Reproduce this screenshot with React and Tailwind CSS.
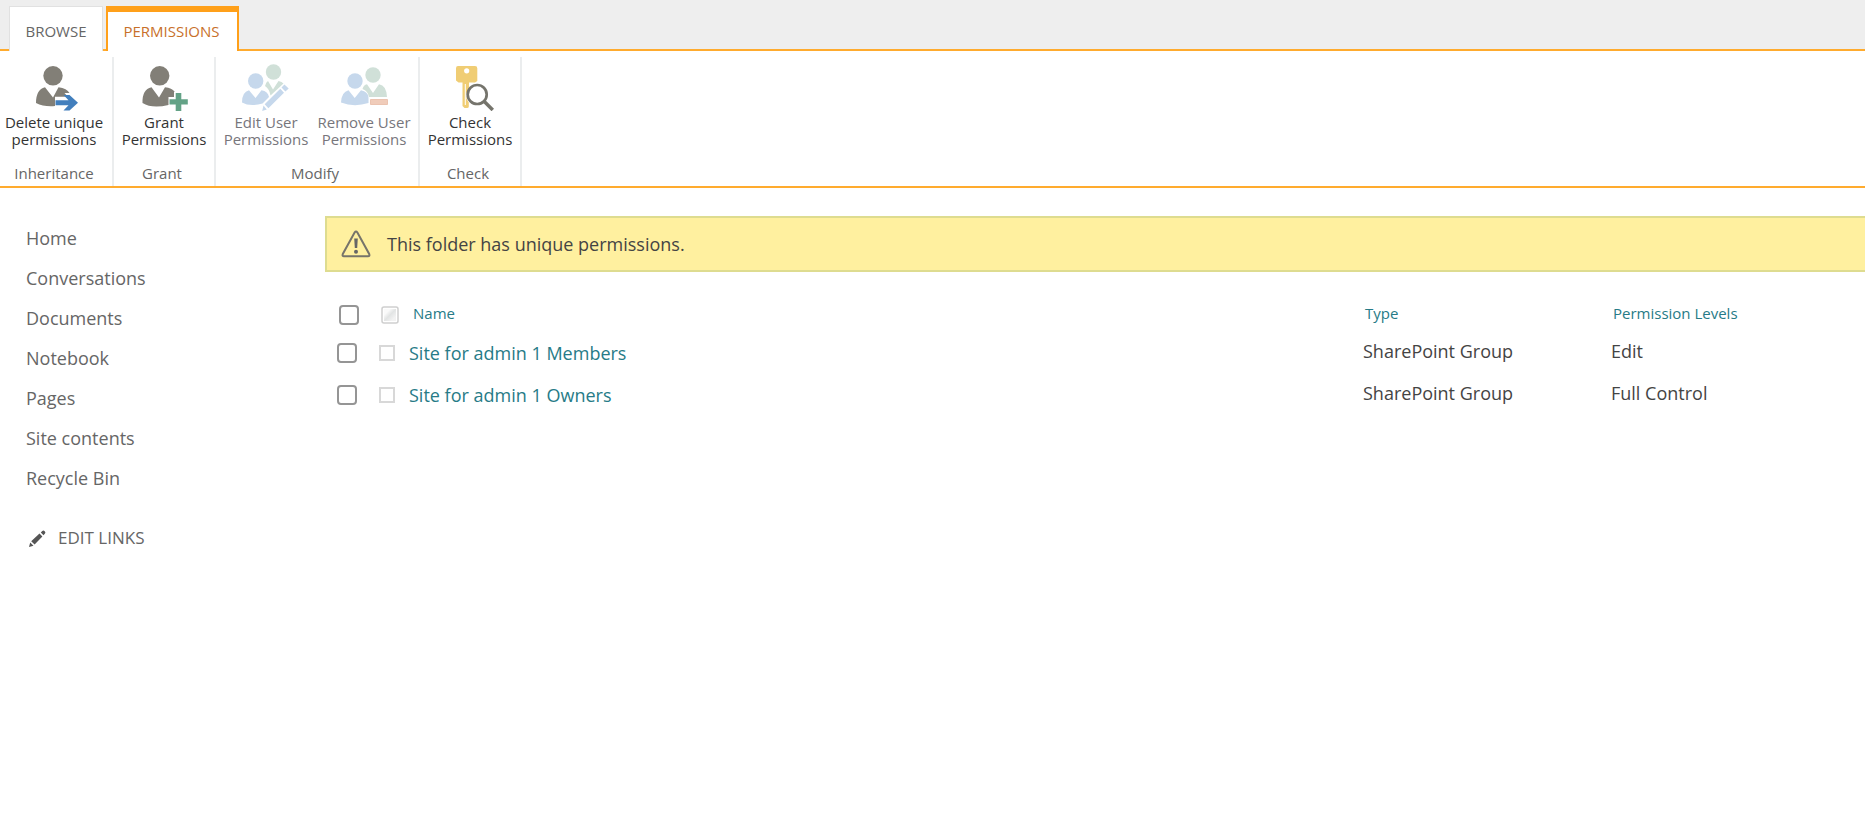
import React from "react";

const NAV_LINKS = ["Home", "Conversations", "Documents", "Notebook", "Pages", "Site contents", "Recycle Bin"];

const ROWS = [
  { name: "Site for admin 1 Members", type: "SharePoint Group", level: "Edit" },
  { name: "Site for admin 1 Owners", type: "SharePoint Group", level: "Full Control" },
];

const iconProps = { width: 48, height: 48, viewBox: "0 0 48 48", "aria-hidden": true };

function DeleteIcon() {
  return (
    <svg {...iconProps}>
      <circle cx="23" cy="12.8" r="9.7" fill="#827f77" />
      <path d="M15 24.3 L23 34.5 L28.5 24.3 Q37 25.5 39.5 30 L34.5 30 L37.8 33.8 L25 33.8 L25 43 Q14 44 6 40 Q6 26.5 15 24.3Z" fill="#827f77" />
      <path d="M25.5 37.3 H38.5 L33.5 32 H39.5 L48 39.8 L39.5 47.6 H33.5 L38.5 42.3 H25.5Z" fill="#427fbd" />
    </svg>
  );
}

function GrantIcon() {
  return (
    <svg {...iconProps}>
      <circle cx="19.7" cy="12.8" r="9.7" fill="#827f77" />
      <path d="M11.5 24.3 L19 34.5 L25 24.3 Q32 25 34.5 28.5 L34.5 29 H34 V34 H28.5 V42 Q12 46 2.5 40 Q2 26.5 11.5 24.3Z" fill="#827f77" />
      <path d="M35.7 30 H41.3 V36.2 H47.8 V41.5 H41.3 V48 H35.7 V41.5 H29.5 V36.2 H35.7Z" fill="#63a286" />
    </svg>
  );
}

function EditUserIcon() {
  return (
    <svg {...iconProps}>
      <circle cx="31.5" cy="9" r="7.7" fill="#d0e0d8" />
      <path d="M26 18 L31 26.5 L36.5 18 Q40 18.5 41.5 20.5 L28.5 32.5 Q27.5 26 23 23 Q24 19 26 18Z" fill="#d0e0d8" />
      <circle cx="13.7" cy="18" r="7.7" fill="#c6d8ec" />
      <path d="M7 27.3 L13.5 35 L19.5 27.3 Q26 28.5 27 34 L20.5 40.5 Q8 44 0 39.5 Q0 29 7 27.3Z" fill="#c6d8ec" />
      <path d="M20.2 48 L21.5 42.5 L24.8 46.5Z M22.7 41.2 L38.3 25.8 L42 29.7 L26.4 45.2Z M39.5 24.6 L42.4 21.5 L46.7 25.6 L43.4 28.5Z" fill="#c6d8ec" />
    </svg>
  );
}

function RemoveUserIcon() {
  return (
    <svg {...iconProps}>
      <circle cx="33" cy="12" r="7.7" fill="#d0e0d8" />
      <path d="M27 21.3 L33 30 L39 21.3 Q46.5 22.5 47 34 H29 Q28 28 22.5 26 Q23.5 22 27 21.3Z" fill="#d0e0d8" />
      <circle cx="15" cy="18" r="7.7" fill="#c6d8ec" />
      <path d="M8.5 27.3 L14.7 35 L21 27.3 Q28 28.5 28.5 34.5 V40 Q14 44.5 1 39.5 Q1.5 29 8.5 27.3Z" fill="#c6d8ec" />
      <path d="M30.5 36.5 H47.5 V41.5 H30.5Z" fill="#f0ccba" stroke="#ebc3b0" />
    </svg>
  );
}

function CheckIcon() {
  return (
    <svg {...iconProps}>
      <path d="M12 3 H29 Q31.3 3 31.3 5.2 V18 L29 19.5 H23 V26 Q20 29 20 32.500 Q20 36.500 22.800 39.500 V43.500 Q22.800 45 21 45 H18.500 L16.500 43 V19.500 H12.500 L10 17.500 V5.200 Q10 3 12 3Z" fill="#f0cd74" />
      <path d="M19.300 21 V42" stroke="#fff" strokeWidth="1" />
      <circle cx="20.700" cy="7.800" r="2.600" fill="#fff" />
      <circle cx="31.200" cy="31.500" r="9.500" fill="#fff" stroke="#75746c" strokeWidth="2.700" />
      <path d="M38.300 38.500 L46.800 47" stroke="#75746c" strokeWidth="3.500" fill="none" />
    </svg>
  );
}

function RibbonButton({ icon, label, disabled, className }) {
  return (
    <button
      type="button"
      disabled={disabled}
      className={`flex shrink-0 flex-col items-center text-[15px] leading-[17px] ${disabled ? "text-[#77767c]" : "text-[#333]"} ${className}`}
    >
      {icon}
      <span className="mt-[3px] whitespace-pre">{label}</span>
    </button>
  );
}

function RibbonGroup({ label, className, children }) {
  return (
    <section aria-label={label} className={`flex flex-col justify-between border-r-2 border-[#ebedee] ${className}`}>
      <div className="flex pt-1.5">{children}</div>
      <div className="pr-1 pb-[3px] text-center text-[15px] leading-5 text-[#666]">{label}</div>
    </section>
  );
}

const checkbox = "block size-5 appearance-none rounded-[4px] border-2 border-[#959595] bg-white checked:bg-[#0072c6]";

export default function App() {
  return (
    <div className="min-h-screen bg-white font-['Open_Sans','Noto_Sans',sans-serif] text-[#444]">
      <header>
        <div role="tablist" className="flex h-[51px] items-end gap-[3px] border-b-2 border-[#ffab2e] bg-[#eee] pl-[9px] text-[15px]">
          <button type="button" role="tab" aria-selected="false" className="-mb-0.5 h-[45px] w-[94px] border border-b-0 border-[#e1e1e1] bg-white pt-1 text-[#666]">
            BROWSE
          </button>
          <button type="button" role="tab" aria-selected="true" className="-mb-0.5 h-[45px] w-[133px] border-2 border-t-[6px] border-b-0 border-[#ffa01a] bg-white pr-0.5 text-[#c8702a]">
            PERMISSIONS
          </button>
        </div>
        <div className="flex h-[137px] border-b-2 border-[#ffab2e] pt-1.5">
          <RibbonGroup label="Inheritance" className="w-[114px]">
            <RibbonButton icon={<DeleteIcon />} label={"Delete unique\npermissions"} className="w-[108px]" />
          </RibbonGroup>
          <RibbonGroup label="Grant" className="w-[102px]">
            <RibbonButton icon={<GrantIcon />} label={"Grant\nPermissions"} className="w-[100px]" />
          </RibbonGroup>
          <RibbonGroup label="Modify" className="w-[204px]">
            <RibbonButton icon={<EditUserIcon />} label={"Edit User\nPermissions"} disabled className="w-[100px]" />
            <RibbonButton icon={<RemoveUserIcon />} label={"Remove User\nPermissions"} disabled className="w-24" />
          </RibbonGroup>
          <RibbonGroup label="Check" className="w-[102px]">
            <RibbonButton icon={<CheckIcon />} label={"Check\nPermissions"} className="w-[100px]" />
          </RibbonGroup>
        </div>
      </header>

      <div className="flex pt-7">
        <nav className="w-[325px] shrink-0 pt-0.5 pl-[26px] text-[18px] text-[#666]">
          <ul>
            {NAV_LINKS.map((link) => (
              <li key={link} className="flex h-10 items-center">
                <a href="#">{link}</a>
              </li>
            ))}
          </ul>
          <button type="button" className="mt-5 flex h-10 items-center gap-3 pl-[3px] text-[17px]">
            <svg width="17" height="17" viewBox="0 0 17 17" fill="#555" aria-hidden="true">
              <path d="M0 17 L1.2 12.5 L4.5 15.8Z M2.2 11.3 L10.5 3.6 L13.4 6.5 L5.6 14.6Z M11.8 2.5 L13.3 1 Q14.5 0 15.7 1.2 Q17 2.4 16 3.6 L14.5 5.3Z" />
            </svg>
            <span>EDIT LINKS</span>
          </button>
        </nav>

        <main className="min-w-0 flex-1">
          <div role="status" className="flex h-14 items-center gap-4 border-2 border-r-0 border-[#dedc90] bg-[#fff09f] pl-3.5 text-[18px]">
            <svg width="30" height="28" viewBox="0 0 30 28" aria-hidden="true">
              <path d="M13.6 2.5 Q15 0.5 16.4 2.5 L28.2 24 Q29 26.3 27 26.3 H3 Q1 26.3 1.8 24Z" fill="none" stroke="#77746a" strokeWidth="2" />
              <path d="M13.2 8.5 H16.8 L16.2 18 H13.8Z" fill="#666" />
              <circle cx="15" cy="21.8" r="2" fill="#666" />
            </svg>
            <span>This folder has unique permissions.</span>
          </div>

          <table className="mt-[26px] w-full table-fixed border-collapse text-left">
            <colgroup>
              <col className="w-[54px]" />
              <col className="w-[30px]" />
              <col />
              <col className="w-[248px]" />
              <col className="w-[254px]" />
            </colgroup>
            <thead className="text-[15px] leading-5 text-[#277b87]">
              <tr className="h-[34px]">
                <th className="pl-3.5 font-normal">
                  <input type="checkbox" aria-label="Select all" className={checkbox} />
                </th>
                <th className="pl-0.5 font-normal">
                  <svg width="18" height="18" viewBox="0 0 18 18" aria-hidden="true">
                    <defs>
                      <linearGradient id="tile" x1="0" y1="0" x2="1" y2="1">
                        <stop offset="0.25" stopColor="#fafafa" />
                        <stop offset="0.5" stopColor="#e2e4e4" />
                        <stop offset="0.8" stopColor="#f2f2f2" />
                      </linearGradient>
                    </defs>
                    <rect x="1" y="1" width="16" height="16" rx="2" fill="#fff" stroke="#cfcfcf" strokeWidth="1.5" />
                    <rect x="3" y="3" width="12" height="12" fill="url(#tile)" />
                  </svg>
                </th>
                <th className="pb-1 pl-1 font-normal"><a href="#">Name</a></th>
                <th className="pb-1 pl-0.5 font-normal"><a href="#">Type</a></th>
                <th className="pb-1 pl-0.5 font-normal"><a href="#">Permission Levels</a></th>
              </tr>
            </thead>
            <tbody className="text-[18px]">
              {ROWS.map((row) => (
                <tr key={row.name} className="h-[42px]">
                  <td className="pl-3">
                    <input type="checkbox" aria-label={row.name} className={checkbox} />
                  </td>
                  <td><span className="block size-4 border-2 border-[#d8d8d8]" /></td>
                  <td><a href="#" className="text-[#277b87]">{row.name}</a></td>
                  <td className="pb-[3px]">{row.type}</td>
                  <td className="pb-[3px]">{row.level}</td>
                </tr>
              ))}
            </tbody>
          </table>
        </main>
      </div>
    </div>
  );
}
